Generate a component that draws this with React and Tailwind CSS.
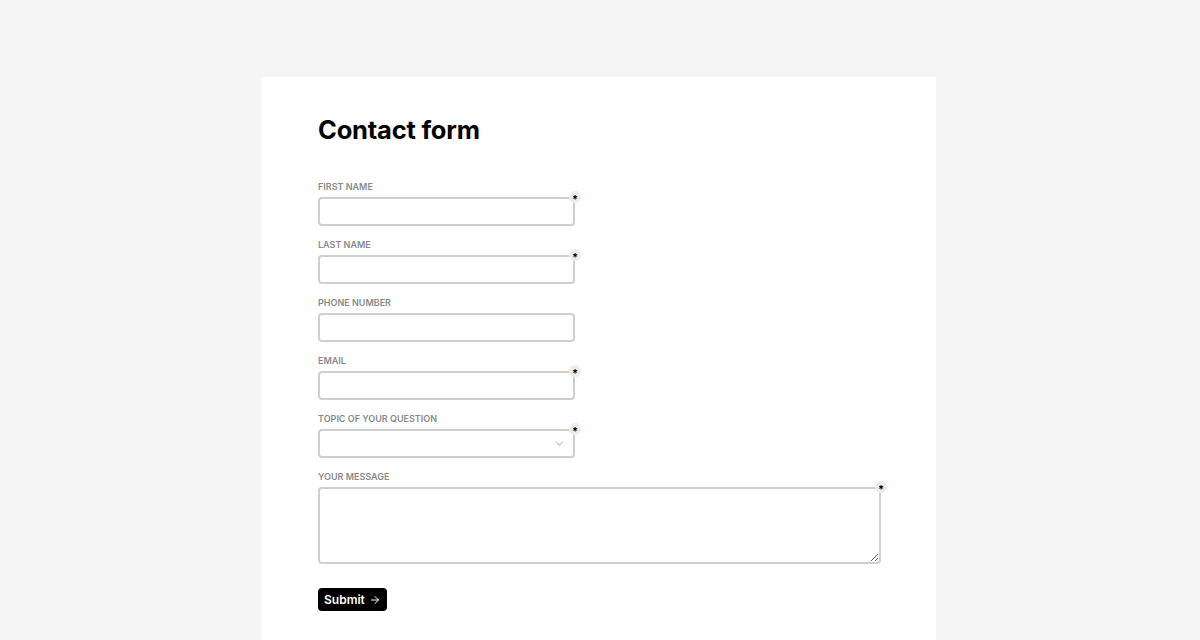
import { ChevronDown, ArrowRight } from 'lucide-react';

function Req() {
  return (
    <span className="absolute -right-[6px] -top-[6px] w-[12px] h-[12px] rounded-full bg-[#ececec] flex items-center justify-center text-[11px] font-bold leading-none text-black pt-[4px]">
      *
    </span>
  );
}

function Field({ label, required, children }) {
  return (
    <div className="flex flex-col items-start">
      <label className="text-[9px] font-semibold uppercase text-[#8a8a8a] leading-[11px] mb-[5px]">{label}</label>
      <div className="relative w-fit">
        {children}
        {required && <Req />}
      </div>
    </div>
  );
}

const inputCls = 'block w-[257px] h-[29px] border-2 border-[#cfcfcf] rounded-[4px] bg-white outline-none';

export default function App() {
  return (
    <div className="min-h-screen bg-[#f5f5f5] flex justify-center pt-[77px]" style={{ fontFamily: 'Inter, "Liberation Sans", sans-serif' }}>
      <div className="w-[674px] bg-white px-[56px] pt-[38px] pb-[40px] ml-[-2px]">
        <h1 className="text-[25.5px] font-bold text-black leading-[30px] tracking-[-0.2px]">Contact form</h1>
        <form className="mt-[36px] flex flex-col gap-[13px]">
          <Field label="First name" required>
            <input className={inputCls} />
          </Field>
          <Field label="Last name" required>
            <input className={inputCls} />
          </Field>
          <Field label="Phone number">
            <input className={inputCls} />
          </Field>
          <Field label="Email" required>
            <input className={inputCls} />
          </Field>
          <Field label="Topic of your question" required>
            <div className={inputCls + ' flex items-center justify-end pr-[7px]'}>
              <ChevronDown className="w-[13px] h-[13px] text-[#8a8a8a]" strokeWidth={1.5} />
            </div>
          </Field>
          <Field label="Your message" required>
            <textarea className="block w-[563px] h-[77px] border-2 border-[#cfcfcf] rounded-[4px] bg-white outline-none resize-y" />
          </Field>
          <div className="mt-[11px]">
            <button type="button" className="bg-black text-white text-[12px] font-semibold rounded-[4px] h-[23px] px-[6px] flex items-center gap-[4px]">
              Submit
              <ArrowRight className="w-[12px] h-[12px]" strokeWidth={2} />
            </button>
          </div>
        </form>
      </div>
    </div>
  );
}
